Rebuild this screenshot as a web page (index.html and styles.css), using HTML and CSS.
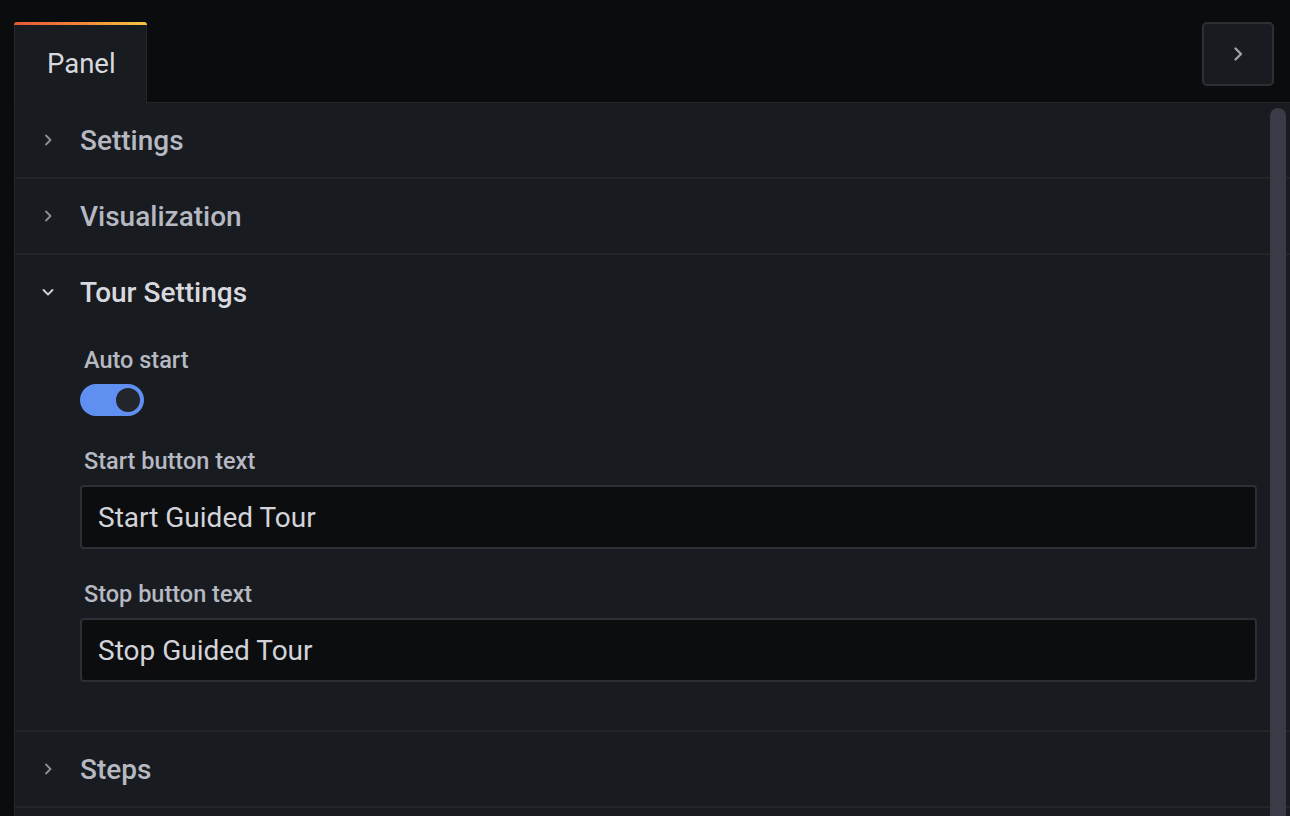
FILE: index.html
```html
<!DOCTYPE html>
<html>
<head>
<meta charset="utf-8">
<link rel="stylesheet" href="styles.css">
</head>
<body>
<div class="app">
  <div class="header">
    <div class="tab">Panel</div>
    <div class="spacer"></div>
    <button class="collapse-btn" aria-label="Collapse">
      <svg width="20" height="20" viewBox="0 0 20 20"><path d="M7.5 4.5 L13 10 L7.5 15.5" fill="none" stroke="#a0a2ab" stroke-width="2.4" stroke-linecap="round" stroke-linejoin="round"/></svg>
    </button>
  </div>
  <div class="body">
    <div class="group">
      <div class="group-head">
        <svg class="chev" width="16" height="16" viewBox="0 0 16 16"><path d="M6 3.5 L10.5 8 L6 12.5" fill="none" stroke="#8e9099" stroke-width="1.8" stroke-linecap="round" stroke-linejoin="round"/></svg>
        <span class="group-title">Settings</span>
      </div>
    </div>
    <div class="group">
      <div class="group-head">
        <svg class="chev" width="16" height="16" viewBox="0 0 16 16"><path d="M6 3.5 L10.5 8 L6 12.5" fill="none" stroke="#8e9099" stroke-width="1.8" stroke-linecap="round" stroke-linejoin="round"/></svg>
        <span class="group-title">Visualization</span>
      </div>
    </div>
    <div class="group">
      <div class="group-head">
        <svg class="chev" width="16" height="16" viewBox="0 0 16 16"><path d="M3.5 6 L8 10.5 L12.5 6" fill="none" stroke="#d0d1d8" stroke-width="1.9" stroke-linecap="round" stroke-linejoin="round"/></svg>
        <span class="group-title open">Tour Settings</span>
      </div>
      <div class="group-body">
        <div class="field">
          <div class="label">Auto start</div>
          <div class="toggle"><div class="knob"></div></div>
        </div>
        <div class="field">
          <div class="label">Start button text</div>
          <div class="input">Start Guided Tour</div>
        </div>
        <div class="field">
          <div class="label">Stop button text</div>
          <div class="input">Stop Guided Tour</div>
        </div>
      </div>
    </div>
    <div class="group">
      <div class="group-head">
        <svg class="chev" width="16" height="16" viewBox="0 0 16 16"><path d="M6 3.5 L10.5 8 L6 12.5" fill="none" stroke="#8e9099" stroke-width="1.8" stroke-linecap="round" stroke-linejoin="round"/></svg>
        <span class="group-title">Steps</span>
      </div>
    </div>
    <div class="scrollbar"></div>
  </div>
</div>
</body>
</html>
```

FILE: styles.css
```css
html, body {
  margin: 0;
  padding: 0;
  background: #0b0c0e;
  font-family: Roboto, "Liberation Sans", sans-serif;
  overflow: hidden;
}
.app {
  width: 1290px;
  height: 816px;
  display: flex;
  flex-direction: column;
  padding-left: 14px;
  box-sizing: border-box;
}
.header {
  height: 103px;
  display: flex;
  align-items: flex-start;
  border-bottom: 1px solid #23252a;
  box-sizing: border-box;
  flex-shrink: 0;
}
.tab {
  margin-top: 22px;
  width: 133px;
  height: 82px;
  box-sizing: border-box;
  background: #181b1f;
  border-left: 1px solid #25272c;
  border-right: 1px solid #25272c;
  border-radius: 4px 4px 0 0;
  position: relative;
  z-index: 1;
  color: #d8d9de;
  font-size: 27.5px;
  font-weight: 400;
  padding-left: 32px;
  padding-top: 26px;
  line-height: 32px;
}
.tab::before {
  content: "";
  position: absolute;
  top: 0;
  left: -1px;
  right: -1px;
  height: 3px;
  border-radius: 4px 4px 0 0;
  background: linear-gradient(90deg, #e5573b, #f3863a 50%, #f7c843);
}
.spacer { flex: 1; }
.collapse-btn {
  margin-top: 22px;
  margin-right: 16px;
  width: 72px;
  height: 64px;
  background: #181b1f;
  border: 2px solid #2c2f34;
  border-radius: 5px;
  display: flex;
  align-items: center;
  justify-content: center;
  padding: 0;
}
.body {
  flex: 1;
  background: #181b1f;
  border-left: 1px solid #23252a;
  position: relative;
}
.group {
  border-bottom: 2px solid #232529;
}
.group-head {
  height: 74px;
  display: flex;
  align-items: center;
}
.chev {
  margin-left: 25px;
  width: 16px;
  height: 16px;
  margin-right: 24px;
}
.group-title {
  color: #b6b8c2;
  font-size: 28px;
  font-weight: 500;
}
.group-title.open {
  color: #d8d9de;
}
.group-body {
  padding: 17px 33px 17px 65px;
}
.field {
  margin-bottom: 31px;
}
.label {
  color: #b6b8c2;
  font-size: 23.5px;
  font-weight: 500;
  line-height: 28px;
  padding-left: 4px;
  margin-bottom: 10px;
}
.toggle {
  width: 64px;
  height: 32px;
  border-radius: 16px;
  background: #5f8ff0;
  display: flex;
  align-items: center;
  justify-content: flex-end;
  padding-right: 4px;
  box-sizing: border-box;
}
.knob {
  width: 24px;
  height: 24px;
  border-radius: 50%;
  background: #22252b;
}
.input {
  height: 64px;
  box-sizing: border-box;
  background: #0c0d0f;
  border: 2px solid #2c3035;
  border-radius: 4px;
  color: #d3d4da;
  font-size: 28px;
  display: flex;
  align-items: center;
  padding-left: 16px;
}
.scrollbar {
  position: absolute;
  top: 5px;
  left: 1255px;
  width: 16px;
  height: 720px;
  border-radius: 8px 8px 0 0;
  background: #3a3b47;
}
```
